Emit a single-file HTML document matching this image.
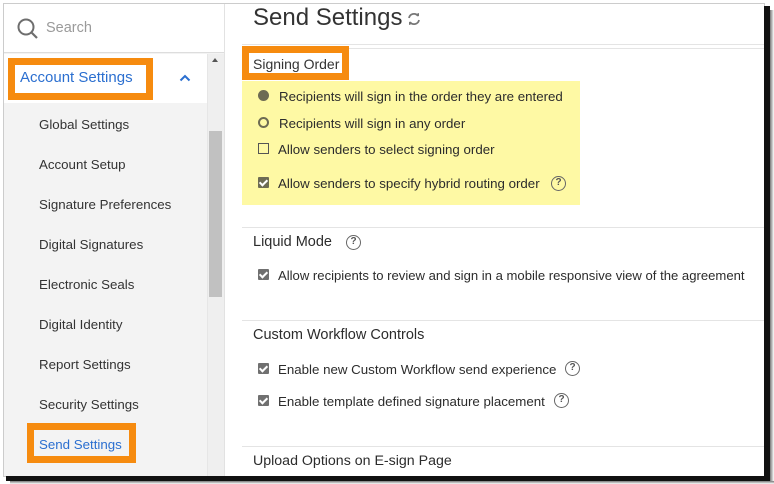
<!DOCTYPE html>
<html><head><style>
*{margin:0;padding:0;box-sizing:border-box}
body{width:774px;height:484px;background:#fff;position:relative;overflow:hidden;font-family:"Liberation Sans",sans-serif;color:#2c2c2c}
.a{position:absolute}
.t{position:absolute;font-size:13.3px;white-space:nowrap}
.nav{position:absolute;left:39px;font-size:13.3px;color:#333;white-space:nowrap}
.q{position:absolute;width:15px;height:15px;border:1.5px solid #666;border-radius:50%;font-size:10px;font-weight:bold;color:#555;text-align:center;line-height:12px}
.cb{position:absolute;width:11px;height:11px;background:#707070;border-radius:1px}
.cb:after{content:"";position:absolute;left:3px;top:1px;width:3px;height:6px;border:solid #fff;border-width:0 2px 2px 0;transform:rotate(45deg)}
.hr{position:absolute;left:242px;width:522px;height:1px;background:#e4e4e4}
</style></head><body>
<div class="a" style="left:3px;top:3px;width:762px;height:474px;border:1px solid #ccc;background:#fff"></div>
<div class="a" style="left:4px;top:53px;width:220px;height:423px;background:#f3f3f3"></div>
<div class="a" style="left:4px;top:52px;width:220px;height:1px;background:#ddd"></div>
<div class="a" style="left:4px;top:54px;width:203px;height:49px;background:#fff"></div>
<div class="a" style="left:207px;top:54px;width:18px;height:422px;background:#efefef;border-left:1px solid #e6e6e6"></div>
<div class="a" style="left:209px;top:131px;width:13px;height:166px;background:#c1c1c1"></div>
<div class="a" style="left:212px;top:58px;width:0;height:0;border-left:3px solid transparent;border-right:3px solid transparent;border-bottom:4px solid #555"></div>
<div class="a" style="left:224px;top:4px;width:1px;height:472px;background:#e2e2e2"></div>
<svg class="a" style="left:16px;top:17px" width="24" height="24"><circle cx="10" cy="10" r="7.5" fill="none" stroke="#6e6e6e" stroke-width="2"/><line x1="15.5" y1="15.5" x2="21" y2="21" stroke="#6e6e6e" stroke-width="2.2"/></svg>
<div class="t" style="left:46px;top:20px;font-size:14.5px;color:#9a9a9a">Search</div>
<div class="a" style="left:8px;top:58px;width:145px;height:42px;border:7px solid #f68b0f;background:#fff"></div>
<div class="t" style="left:20px;top:69px;font-size:15px;color:#2b6fd0">Account Settings</div>
<svg class="a" style="left:179px;top:74px" width="12" height="8"><path d="M1.5 6.5 L6 2 L10.5 6.5" fill="none" stroke="#2b6fd0" stroke-width="2"/></svg>
<div class="nav" style="top:117px">Global Settings</div>
<div class="nav" style="top:157px">Account Setup</div>
<div class="nav" style="top:197px">Signature Preferences</div>
<div class="nav" style="top:237px">Digital Signatures</div>
<div class="nav" style="top:277px">Electronic Seals</div>
<div class="nav" style="top:317px">Digital Identity</div>
<div class="nav" style="top:357px">Report Settings</div>
<div class="nav" style="top:397px">Security Settings</div>
<div class="a" style="left:27px;top:423px;width:109px;height:40px;border:7px solid #f68b0f;background:#f3f3f3"></div>
<div class="nav" style="top:437px;color:#2b6fd0">Send Settings</div>
<div class="t" style="left:253px;top:4px;font-size:24px;color:#333">Send Settings</div>
<svg class="a" style="left:406px;top:11px" width="16" height="16"><path d="M3 7 A5 5 0 0 1 12 5" fill="none" stroke="#777" stroke-width="1.8"/><path d="M13 9 A5 5 0 0 1 4 11" fill="none" stroke="#777" stroke-width="1.8"/><path d="M10 3 L13 5.5 L13 2Z" fill="#777"/><path d="M6 13 L3 10.5 L3 14Z" fill="#777"/></svg>
<div class="hr" style="top:44px"></div>
<div class="hr" style="top:48px"></div>
<div class="a" style="left:242px;top:46px;width:107px;height:34px;border:7px solid #f68b0f;background:#fff"></div>
<div class="t" style="left:253px;top:56px;font-size:14px;color:#333">Signing Order</div>
<div class="a" style="left:242px;top:81px;width:338px;height:124px;background:#fef9a4"></div>
<div class="a" style="left:258px;top:90px;width:11px;height:11px;border-radius:50%;background:#6d6b53"></div>
<div class="t" style="left:279px;top:89px">Recipients will sign in the order they are entered</div>
<div class="a" style="left:258px;top:117px;width:11px;height:11px;border-radius:50%;border:2px solid #6d6b53"></div>
<div class="t" style="left:279px;top:116px">Recipients will sign in any order</div>
<div class="a" style="left:258px;top:143px;width:11px;height:11px;border:1.5px solid #555"></div>
<div class="t" style="left:278px;top:142px">Allow senders to select signing order</div>
<div class="cb" style="left:258px;top:177px;background:#6d6b53"></div>
<div class="t" style="left:278px;top:176px">Allow senders to specify hybrid routing order</div>
<div class="q" style="left:551px;top:176px">?</div>
<div class="hr" style="top:227px"></div>
<div class="t" style="left:253px;top:234px;font-size:14.5px">Liquid Mode</div>
<div class="q" style="left:346px;top:235px">?</div>
<div class="cb" style="left:258px;top:269px"></div>
<div class="t" style="left:278px;top:268px;font-size:13.1px">Allow recipients to review and sign in a mobile responsive view of the agreement</div>
<div class="hr" style="top:320px"></div>
<div class="t" style="left:253px;top:327px;font-size:14.5px">Custom Workflow Controls</div>
<div class="cb" style="left:258px;top:363px"></div>
<div class="t" style="left:278px;top:362px">Enable new Custom Workflow send experience</div>
<div class="q" style="left:565px;top:361px">?</div>
<div class="cb" style="left:258px;top:395px"></div>
<div class="t" style="left:278px;top:394px">Enable template defined signature placement</div>
<div class="q" style="left:554px;top:393px">?</div>
<div class="hr" style="top:446px"></div>
<div class="t" style="left:253px;top:453px;font-size:14.2px">Upload Options on E-sign Page</div>
<div class="a" style="left:764px;top:6px;width:6px;height:476px;background:#111"></div>
<div class="a" style="left:770px;top:10px;width:4px;height:474px;background:linear-gradient(90deg,#777,#fff)"></div>
<div class="a" style="left:6px;top:476px;width:764px;height:5px;background:#111"></div>
<div class="a" style="left:10px;top:481px;width:764px;height:3px;background:linear-gradient(#777,#fff)"></div>
</body></html>
